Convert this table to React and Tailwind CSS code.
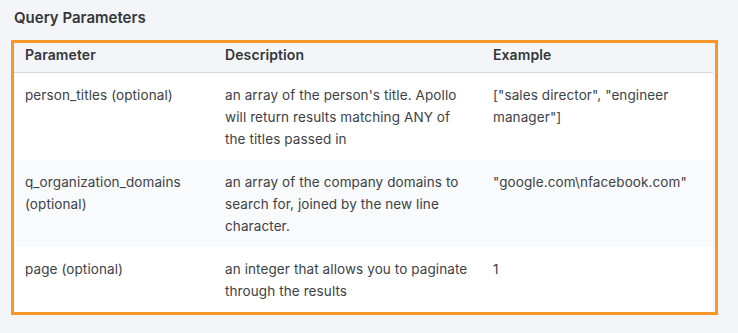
const rows = [
  {
    param: 'person_titles (optional)',
    desc: "an array of the person's title. Apollo will return results matching ANY of the titles passed in",
    example: '["sales director", "engineer manager"]',
  },
  {
    param: 'q_organization_domains (optional)',
    desc: 'an array of the company domains to search for, joined by the new line character.',
    example: '"google.com\\nfacebook.com"',
  },
  {
    param: 'page (optional)',
    desc: 'an integer that allows you to paginate through the results',
    example: '1',
  },
];

export default function App() {
  return (
    <div className="w-[738px] h-[333px] bg-[#f3f5f8] pt-[8px] font-['Inter',sans-serif] text-[#3d4148]">
      {/* Section title */}
      <h2 className="pl-[14px] text-[15px] leading-[20px] font-semibold text-[#33363b]">Query Parameters</h2>

      {/* Highlighted table */}
      <div className="mt-[12px] ml-[11px] w-[707px] border-[3px] border-[#f8962a]">
        <table className="w-[699px] table-fixed border-collapse text-[13.5px] tracking-[0.1px]">
          <colgroup>
            <col className="w-[200px]" />
            <col className="w-[268px]" />
            <col />
          </colgroup>
          <thead>
            <tr className="border-b border-[#d4d7dc]">
              <th className="px-[11px] pt-[1px] pb-[6px] leading-[22px] text-left text-[14px] font-semibold text-[#33363b]">Parameter</th>
              <th className="px-[11px] pt-[1px] pb-[6px] leading-[22px] text-left text-[14px] font-semibold text-[#33363b]">Description</th>
              <th className="px-[11px] pt-[1px] pb-[6px] leading-[22px] text-left text-[14px] font-semibold text-[#33363b]">Example</th>
            </tr>
          </thead>
          <tbody>
            {rows.map((row, i) => (
              <tr key={row.param} className={i % 2 === 1 ? 'bg-[#f9fafb]' : 'bg-white'}>
                <td className="px-[11px] pt-[11px] pb-[10px] leading-[22px] align-top">{row.param}</td>
                <td className="px-[11px] pt-[11px] pb-[10px] leading-[22px] align-top">{row.desc}</td>
                <td className="px-[11px] pt-[11px] pb-[10px] leading-[22px] align-top">{row.example}</td>
              </tr>
            ))}
          </tbody>
        </table>
      </div>
    </div>
  );
}
